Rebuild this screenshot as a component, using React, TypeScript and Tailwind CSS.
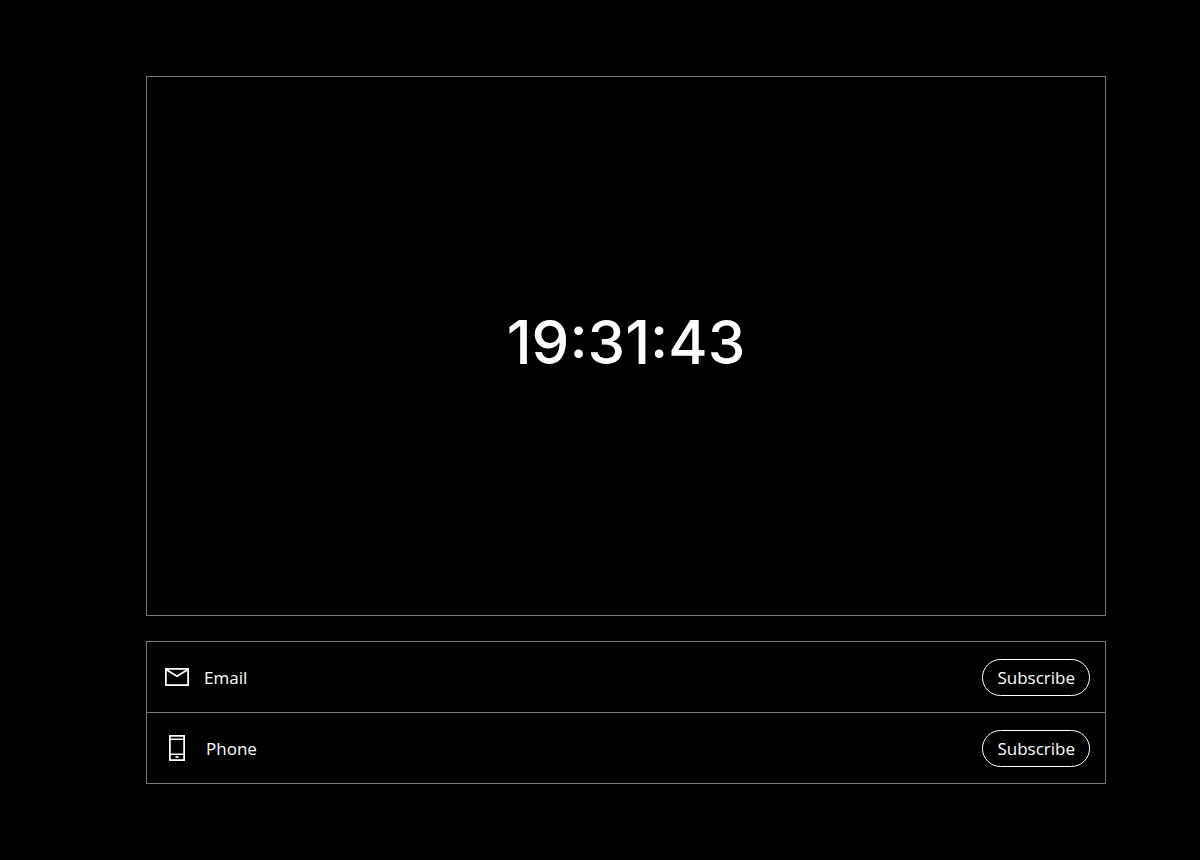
import { useState } from "react";

interface ChannelRowProps {
  label: string;
  icon: React.ReactNode;
}

function MailIcon() {
  return (
    <svg width="24" height="18" viewBox="0 0 24 18" fill="none" stroke="currentColor" strokeWidth="1.75" aria-hidden="true">
      <rect x="0.875" y="0.875" width="22.25" height="16.25" />
      <path d="M1.5 1.75L12 8.2L22.5 1.75" />
    </svg>
  );
}

function PhoneIcon() {
  return (
    <svg width="26" height="26" viewBox="0 0 26 26" fill="none" stroke="currentColor" strokeWidth="1.75" aria-hidden="true">
      <rect x="4.875" y="0.875" width="14.25" height="24.25" />
      <path d="M5 4.25H19M5 19.25H19" strokeWidth="1.5" />
      <path d="M10.5 22H13.5" />
    </svg>
  );
}

function ChannelRow({ label, icon }: ChannelRowProps) {
  const [subscribed, setSubscribed] = useState(false);

  return (
    <li className="flex h-[71px] items-center justify-between border-b border-[#767676] pr-[15px] pl-[18px]">
      <div className="flex items-center gap-[15px]">
        {icon}
        <span className="pt-0.5 leading-6">{label}</span>
      </div>
      <button
        type="button"
        aria-label={`${subscribed ? "Unsubscribe from" : "Subscribe to"} ${label}`}
        onClick={() => setSubscribed((s) => !s)}
        className="h-[37px] cursor-pointer rounded-full border border-white px-3.5 pt-0.5 leading-6 hover:bg-white/10"
      >
        {subscribed ? "Subscribed" : "Subscribe"}
      </button>
    </li>
  );
}

export default function App() {
  return (
    <main className="min-h-screen bg-black pt-[76px] pb-[76px] pl-[52px] font-['Open_Sans','Noto_Sans',sans-serif] text-[17px] text-white">
      <div className="mx-auto flex max-w-[960px] flex-col gap-[25px]">
        <section className="flex aspect-video items-center justify-center border border-[#767676] pb-2">
          <time className="font-['Inter','Liberation_Sans',sans-serif] text-[60px] leading-none font-medium">
            19:31:43
          </time>
        </section>
        <ul className="border-x border-t border-[#767676]">
          <ChannelRow label="Email" icon={<MailIcon />} />
          <ChannelRow label="Phone" icon={<PhoneIcon />} />
        </ul>
      </div>
    </main>
  );
}
